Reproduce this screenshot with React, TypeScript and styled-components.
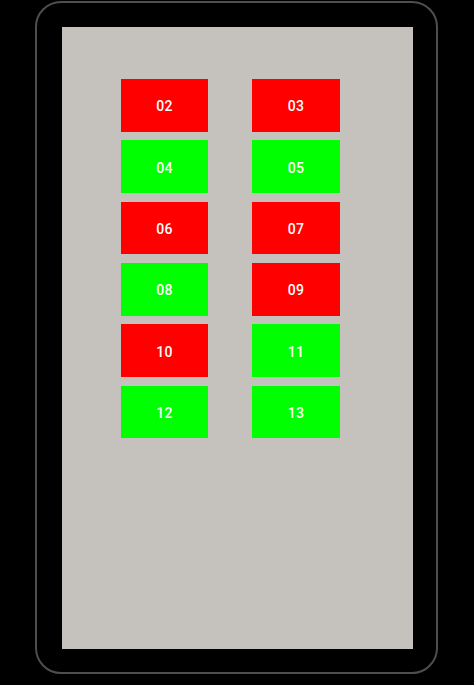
import React from "react";
import styled, { createGlobalStyle } from "styled-components";

const Global = createGlobalStyle`
  html, body { margin: 0; padding: 0; background: #000; }
  body { font-family: Roboto, "Noto Sans", sans-serif; }
`;

const Device = styled.div`
  box-sizing: border-box;
  margin: 1px 0 0 35px;
  width: 403px;
  height: 673px;
  border: 2px solid #4e4e4e;
  border-radius: 26px;
  padding: 24px 0 0 25px;
`;

const Screen = styled.div`
  box-sizing: border-box;
  width: 351px;
  height: 622px;
  background: #c5c1bc;
  padding: 52px 0 0 59px;
`;

const Grid = styled.div`
  display: grid;
  grid-template-columns: 87px 88px;
  grid-auto-rows: 52.6px;
  column-gap: 44px;
  row-gap: 8.75px;
`;

const Tile = styled.div<{ $on: boolean }>`
  display: flex;
  align-items: center;
  justify-content: center;
  padding-top: 2px;
  box-sizing: border-box;
  background: ${(p) => (p.$on ? "#00ff00" : "#ff0000")};
  color: #fff;
  font-size: 14px;
  font-weight: 500;
  letter-spacing: 0.2px;
`;

const tiles: [string, boolean][] = [
  ["02", false],
  ["03", false],
  ["04", true],
  ["05", true],
  ["06", false],
  ["07", false],
  ["08", true],
  ["09", false],
  ["10", false],
  ["11", true],
  ["12", true],
  ["13", true],
];

export default function App() {
  return (
    <>
      <Global />
      <Device>
        <Screen>
          <Grid>
            {tiles.map(([label, on]) => (
              <Tile key={label} $on={on}>
                {label}
              </Tile>
            ))}
          </Grid>
        </Screen>
      </Device>
    </>
  );
}
